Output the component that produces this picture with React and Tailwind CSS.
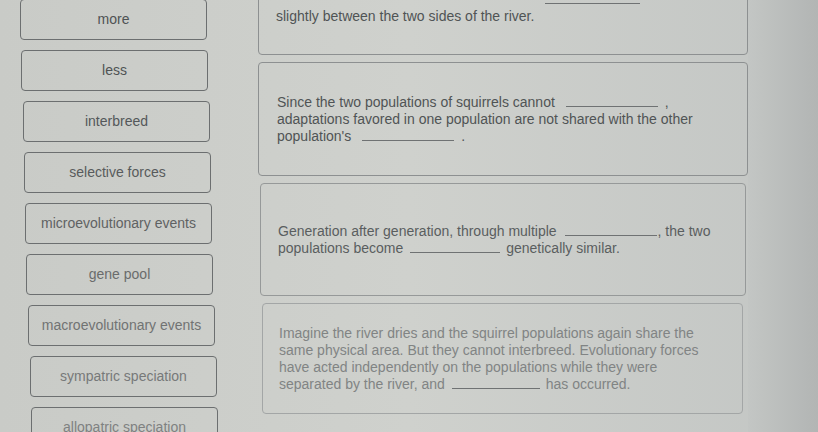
import React from 'react';

const options = [
    { label: 'more', cls: 'ml-[20px] text-[#4f5354]' },
    { label: 'less', cls: 'ml-[21px] text-[#4f5354]' },
    { label: 'interbreed', cls: 'ml-[23px] text-[#54585a]' },
    { label: 'selective forces', cls: 'ml-[24px] text-[#585b5c]' },
    { label: 'microevolutionary events', cls: 'ml-[25px] text-[#5f6263]' },
    { label: 'gene pool', cls: 'ml-[26px] text-[#6a6c6c]' },
    { label: 'macroevolutionary events', cls: 'ml-[28px] text-[#717373]' },
    { label: 'sympatric speciation', cls: 'ml-[30px] text-[#777979]' },
    { label: 'allopatric speciation', cls: 'ml-[31px] text-[#7f8181]' },
];

const Blank = ({ w = 'w-[92px]', m = 'mx-[7px]' }) => (
    <span className={`inline-block ${w} h-[13px] border-b border-[#6f7273] ${m} align-baseline`} />
);

const App = () => {
    return (
        <div
            className="w-[818px] h-[432px] overflow-hidden bg-gradient-to-r from-[#c9cbc7] via-[#cfd1cd] to-[#c3c6c4] flex text-[14px] leading-[17px]"
            style={{ fontFamily: '"Liberation Sans", Arial, sans-serif' }}
        >
            {/* Answer choices */}
            <div className="w-[250px] shrink-0 flex flex-col gap-[10px] -mt-[1px] text-[14px]">
                {options.map((opt) => (
                    <div
                        key={opt.label}
                        className={`${opt.cls} w-[187px] h-[41px] shrink-0 flex items-center justify-center border border-[#6c6f70] rounded-[4px] whitespace-nowrap`}
                    >
                        {opt.label}
                    </div>
                ))}
            </div>

            {/* Statements */}
            <div className="ml-[8px] w-[490px] shrink-0 flex flex-col gap-[7px] -mt-[40px] text-[#505455]">
                <div className="h-[95px] shrink-0 border border-[#8d9091] rounded-[4px] flex flex-col justify-center px-[17px]">
                    <div className="h-[17px] flex justify-end pr-[83px]">
                        <Blank w="w-[95px]" />
                    </div>
                    <p className="whitespace-nowrap">slightly between the two sides of the river.</p>
                </div>

                <div className="h-[114px] shrink-0 border border-[#8d9091] rounded-[4px] flex items-center px-[18px]">
                    <p className="whitespace-nowrap">
                        Since the two populations of squirrels cannot <Blank />,
                        <br />
                        adaptations favored in one population are not shared with the other
                        <br />
                        population's <Blank />.
                    </p>
                </div>

                <div className="h-[113px] shrink-0 border border-[#969999] rounded-[4px] flex items-center px-[17px] ml-[2px] w-[486px] text-[#5a5e5f]">
                    <p className="whitespace-nowrap">
                        Generation after generation, through multiple <Blank m="ml-[4px] mr-[1px]" />, the two
                        <br />
                        populations become <Blank w="w-[90px]" m="ml-[3px] mr-[6px]" />genetically similar.
                    </p>
                </div>

                <div className="h-[111px] shrink-0 border border-[#a3a6a6] rounded-[4px] flex items-center px-[16px] ml-[4px] w-[481px] text-[#818484]">
                    <p className="whitespace-nowrap">
                        Imagine the river dries and the squirrel populations again share the
                        <br />
                        same physical area. But they cannot interbreed. Evolutionary forces
                        <br />
                        have acted independently on the populations while they were
                        <br />
                        separated by the river, and <Blank w="w-[88px]" m="ml-[3px] mr-[6px]" />has occurred.
                    </p>
                </div>
            </div>

            <div className="flex-1 bg-gradient-to-r from-[#c3c6c4] to-[#b2b5b4]" />
        </div>
    );
};

export default App;
